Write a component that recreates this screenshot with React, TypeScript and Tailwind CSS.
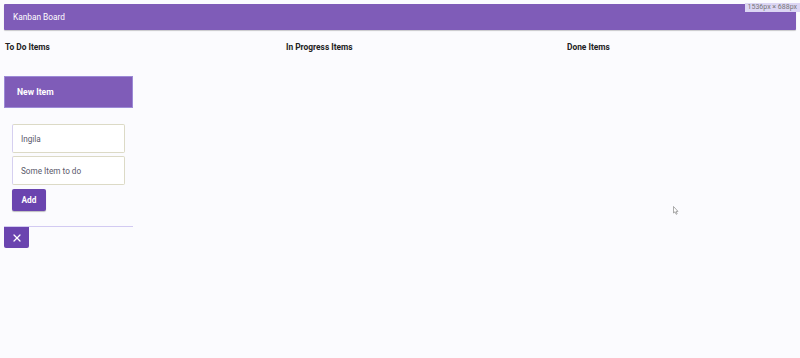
import { X } from 'lucide-react';

const font = { fontFamily: 'Roboto, "Liberation Sans", sans-serif' };

function Column({ title }: { title: string }) {
    return (
        <div className="w-[281px] shrink-0">
            <h2 className="text-[8.4px] font-bold text-[#222] leading-none">{title}</h2>
        </div>
    );
}

export default function App() {
    return (
        <div className="relative w-[800px] h-[358px] bg-[#fbfbfe] overflow-hidden" style={font}>
            <div className="px-1 pt-1">
                <header className="h-[26px] bg-[#7f5cb8] rounded-[1px] flex items-center px-[9px] shadow-[0_1px_1px_rgba(0,0,0,0.2)]">
                    <span className="text-white text-[8.3px]">Kanban Board</span>
                </header>
            </div>

            <div className="flex px-[5px] mt-[13px]">
                <Column title="To Do Items" />
                <Column title="In Progress Items" />
                <Column title="Done Items" />
            </div>

            <div className="ml-1 mt-[25px] w-[129px]">
                <div className="h-[32px] bg-[#7f5cb8] border border-[#9c8ad6] flex items-center px-3">
                    <span className="text-white text-[8.6px] font-bold">New Item</span>
                </div>
                <div className="px-2 pt-[16px] pb-[15px] flex flex-col gap-[3px]">
                    <div className="h-[29px] border border-[#dcdac6] border-l-[#d6d0f0] rounded-[2px] bg-white flex items-center px-2 text-[8.2px] text-[#5a5a6a]">
                        Ingila
                    </div>
                    <div className="h-[29px] border border-[#dcdac6] border-l-[#d6d0f0] rounded-[2px] bg-white flex items-center px-2 text-[8.2px] text-[#5a5a6a]">
                        Some Item to do
                    </div>
                    <button className="mt-px w-[34px] h-[22px] bg-[#6a44af] rounded-[2px] text-white text-[8.3px] font-bold shadow-[0_1px_1px_rgba(0,0,0,0.25)]">
                        Add
                    </button>
                </div>
                <div className="border-t border-[#d2caf2]">
                    <button className="w-[25px] h-[21px] bg-[#6a44af] rounded-b-[2px] flex items-center justify-center text-white">
                        <X size={12} strokeWidth={2.5} />
                    </button>
                </div>
            </div>

            <div className="absolute right-0 top-[3px] h-[9px] px-[3px] bg-[#dcd6f4] text-[7px] leading-[9px] text-[#777]">
                1536px × 688px
            </div>

            <svg className="absolute left-[673px] top-[206px]" width="6" height="9" viewBox="0 0 6 9">
                <path d="M0.5 0.5 L0.5 7 L2 5.8 L3.2 8.3 L4.2 7.8 L3 5.4 L5 5.4 Z" fill="#fff" stroke="#888" strokeWidth="0.7" />
            </svg>
        </div>
    );
}
